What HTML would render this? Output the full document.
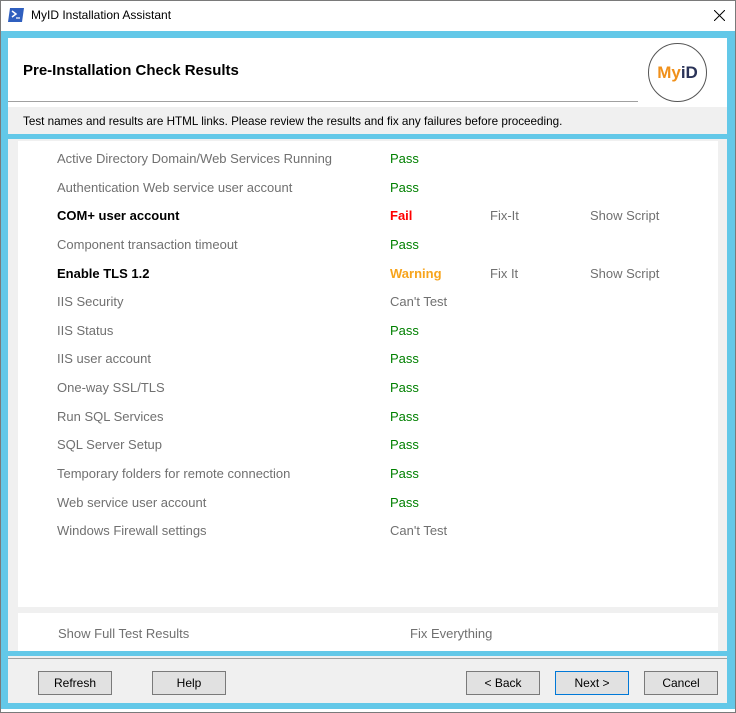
<!DOCTYPE html>
<html><head><style>
*{margin:0;padding:0;box-sizing:border-box}
body{width:736px;height:713px;position:relative;background:#fff;font-family:"Liberation Sans",sans-serif;font-size:13px;overflow:hidden}
.a{position:absolute}
.win{left:0;top:0;width:736px;height:713px;border:1px solid #7a7a7a}
.row{position:absolute;left:57px;height:20px;line-height:20px;color:#707070;white-space:nowrap}
.row span{position:absolute;top:0}
.b{font-weight:bold;color:#000}
.p{color:#008000}
.btn{position:absolute;top:671px;height:24px;width:74px;background:#e1e1e1;border:1px solid #7a7a7a;text-align:center;line-height:22px;font-size:12px;color:#000}
</style></head><body>
<div class="a win"></div>
<svg class="a" style="left:8px;top:8px" width="16" height="14"><polygon points="2,0 16,0 14,14 0,14" fill="#2f5fbf"/><path d="M4,3 L8,6 L4,9" stroke="#fff" stroke-width="1.5" fill="none"/><path d="M8,10 H12" stroke="#fff" stroke-width="1.2"/></svg>
<div class="a" style="left:31px;top:8px;font-size:12px">MyID Installation Assistant</div>
<svg class="a" style="left:714px;top:10px" width="11" height="11"><path d="M0,0 L11,11 M11,0 L0,11" stroke="#000" stroke-width="1"/></svg>
<div class="a" style="left:1px;top:31px;width:734px;height:678px;background:#63c8e8"></div>
<div class="a" style="left:8px;top:38px;width:719px;height:69px;background:#fff"></div>
<div class="a" style="left:8px;top:101px;width:630px;height:1px;background:#a0a0a0"></div>
<div class="a" style="left:23px;top:62px;font-size:15px;font-weight:bold">Pre-Installation Check Results</div>
<div class="a" style="left:648px;top:43px;width:59px;height:59px;border:1px solid #555;border-radius:50%;text-align:center;line-height:57px;font-size:17px;font-weight:bold;color:#f0901a">My<span style="color:#2a3358">iD</span></div>
<div class="a" style="left:8px;top:107px;width:719px;height:27px;background:#f0f0f0;font-size:11.7px;line-height:30px;padding-left:15px">Test names and results are HTML links. Please review the results and fix any failures before proceeding.</div>
<div class="a" style="left:8px;top:139px;width:719px;height:512px;background:#f0f0f0"></div>
<div class="a" style="left:18px;top:141px;width:700px;height:466px;background:#fff"></div>
<div class="a" style="left:18px;top:613px;width:700px;height:38px;background:#fff"></div>
<div class="a" style="left:58px;top:626px;color:#707070">Show Full Test Results</div>
<div class="a" style="left:410px;top:626px;color:#707070">Fix Everything</div>
<div class="a" style="left:8px;top:656px;width:719px;height:47px;background:#f0f0f0"></div>
<div class="a" style="left:8px;top:658px;width:719px;height:1px;background:#a0a0a0"></div>

<div class="row" style="top:149px">Active Directory Domain/Web Services Running<span class="p" style="left:333px">Pass</span></div>
<div class="row" style="top:178px">Authentication Web service user account<span class="p" style="left:333px">Pass</span></div>
<div class="row b" style="top:206px">COM+ user account<span style="left:333px;color:#f00">Fail</span><span style="left:433px;color:#707070;font-weight:normal">Fix-It</span><span style="left:533px;color:#707070;font-weight:normal">Show Script</span></div>
<div class="row" style="top:235px">Component transaction timeout<span class="p" style="left:333px">Pass</span></div>
<div class="row b" style="top:264px">Enable TLS 1.2<span style="left:333px;color:#f7a41c">Warning</span><span style="left:433px;color:#707070;font-weight:normal">Fix It</span><span style="left:533px;color:#707070;font-weight:normal">Show Script</span></div>
<div class="row" style="top:292px">IIS Security<span style="left:333px">Can't Test</span></div>
<div class="row" style="top:321px">IIS Status<span class="p" style="left:333px">Pass</span></div>
<div class="row" style="top:349px">IIS user account<span class="p" style="left:333px">Pass</span></div>
<div class="row" style="top:378px">One-way SSL/TLS<span class="p" style="left:333px">Pass</span></div>
<div class="row" style="top:407px">Run SQL Services<span class="p" style="left:333px">Pass</span></div>
<div class="row" style="top:435px">SQL Server Setup<span class="p" style="left:333px">Pass</span></div>
<div class="row" style="top:464px">Temporary folders for remote connection<span class="p" style="left:333px">Pass</span></div>
<div class="row" style="top:493px">Web service user account<span class="p" style="left:333px">Pass</span></div>
<div class="row" style="top:521px">Windows Firewall settings<span style="left:333px">Can't Test</span></div>

<div class="btn" style="left:38px">Refresh</div>
<div class="btn" style="left:152px">Help</div>
<div class="btn" style="left:466px">&lt; Back</div>
<div class="btn" style="left:555px;border-color:#0078d7">Next &gt;</div>
<div class="btn" style="left:644px">Cancel</div>
</body></html>
